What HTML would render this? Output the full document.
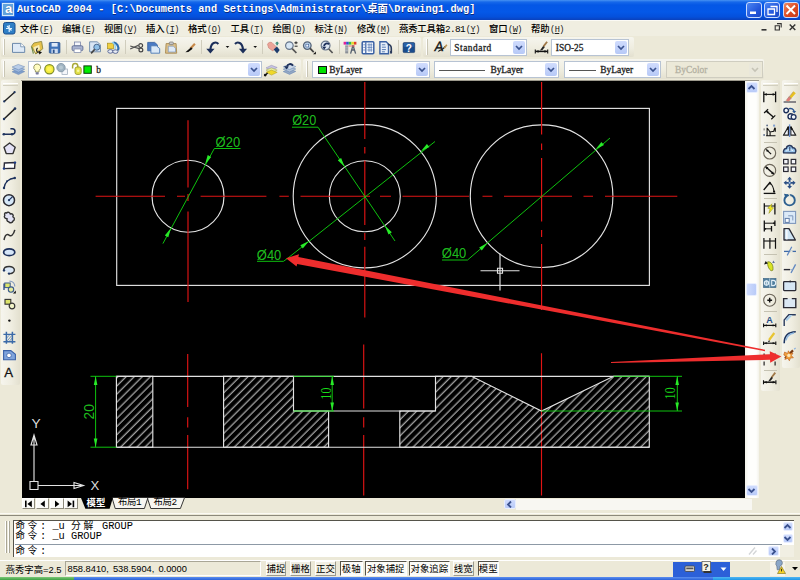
<!DOCTYPE html><html><head><meta charset="utf-8"><title>AutoCAD 2004</title><style>
*{margin:0;padding:0;box-sizing:border-box}
html,body{width:800px;height:580px;overflow:hidden;background:#ece9d8}
body{position:relative;font-family:"Liberation Sans","Noto Sans CJK SC",sans-serif;font-size:9.4px;color:#000}
.abs{position:absolute}
#title{left:0;top:0;width:800px;height:20px;background:linear-gradient(#4792f3 0,#1668ea 10%,#0457e6 25%,#0458e8 60%,#0450dc 84%,#0a41bc 100%)}
#ttext{left:17px;top:3px;color:#fff;font:bold 10.3px "Liberation Mono","Noto Sans CJK SC",monospace;white-space:pre;letter-spacing:0.075px;line-height:13px;text-shadow:0.5px 0.5px 0 #0a2a80}
#menu{left:0;top:20px;width:800px;height:16px;background:#f0eee1;border-top:1px solid #fbfaf5}
.mi{position:absolute;top:23px;line-height:11px;font-size:9.4px;white-space:pre;font-family:"Liberation Mono","Noto Sans CJK SC",monospace;letter-spacing:-0.55px}
.mc{font-weight:500;letter-spacing:-0.2px;font-family:"Liberation Sans","Noto Sans CJK SC",sans-serif}.ml{font-size:8.6px;letter-spacing:-0.5px;color:#222;margin-left:0.6px}
.mono{font-family:"Liberation Mono","Noto Sans CJK SC",monospace}
.tb{position:absolute;background:linear-gradient(#f6f5ee,#efede0 55%,#e3e0cf);border-radius:2px}
.combo{position:absolute;background:#fff;border:1px solid #b7c3d3;height:17px}
.cbtn{position:absolute;top:1px;right:1px;width:12px;height:13px;background:linear-gradient(#d0dcfd,#b7c9f7);border-radius:2px}
.ctext{position:absolute;top:2.6px;line-height:11px;font-size:9.4px;font-family:"Liberation Serif",serif;white-space:pre;color:#111;-webkit-text-stroke:0.3px #222}
.sb{position:absolute;top:561px;height:15px;line-height:14px;font-size:9.4px;text-align:center;border:1px solid;border-color:#fff #9d9a8c #9d9a8c #fff;white-space:nowrap;background:#f1efe4}
.cj{font-size:9.8px;letter-spacing:2.6px;font-family:"Liberation Sans","Noto Sans CJK SC",sans-serif}
.sb.on{border-color:#55534a #fff #fff #55534a;background:#fcfbf7}
</style></head><body>
<div id="title" class="abs"></div>
<div class="abs" style="left:2px;top:3px;width:12px;height:13px;background:#62a3de;border:1.2px solid #d4e8fa;box-shadow:0 0 0 0.5px #5b8fd6"></div>
<div class="abs" style="left:3px;top:1.5px;width:11px;color:#fff;font:bold 13px 'Liberation Sans',sans-serif;line-height:14px;text-align:center;text-shadow:0 0 1px #39629a">a</div>
<div id="ttext" class="abs">AutoCAD 2004 - [C:\Documents and Settings\Administrator\桌面\Drawing1.dwg]</div>
<div class="abs" style="left:746.2px;top:2px;width:16px;height:15.5px;border-radius:3px;border:1px solid #c9dbff;background:linear-gradient(135deg,#4b86f2,#2458dc 60%,#1a46c4)"></div>
<div class="abs" style="left:764.2px;top:2px;width:16px;height:15.5px;border-radius:3px;border:1px solid #c9dbff;background:linear-gradient(135deg,#4b86f2,#2458dc 60%,#1a46c4)"></div>
<div class="abs" style="left:782.6px;top:2px;width:16px;height:15.5px;border-radius:3px;border:1px solid #c9dbff;background:linear-gradient(135deg,#ee8a66,#dc4a22 55%,#c2391a)"></div>
<svg class="abs" style="left:0;top:0" width="800" height="20" viewBox="0 0 800 20"><rect x="750" y="11.5" width="6" height="2.5" fill="#fff"/><path d="M770.5 6.5h6.5v5.5M768 9h6.5v5.5h-6.5z" fill="none" stroke="#fff" stroke-width="1.3"/><path d="M786.5 5.5l8.5 8.5M795 5.5l-8.5 8.5" stroke="#fff" stroke-width="2"/></svg>
<div id="menu" class="abs"></div>
<svg class="abs" style="left:3px;top:21.5px" width="13" height="13" viewBox="0 0 13 13"><rect x="0.5" y="0.5" width="11.5" height="11.5" rx="2" fill="#2f7fc6" stroke="#1b4f8e"/><path d="M3 6.5h6M6.2 3v7M4 4l4.5 4.5" stroke="#dff1ff" stroke-width="1.2" fill="none"/></svg>
<div class="mi" style="left:20px"><span class="mc">文件</span><span class="ml">(<u>F</u>)</span></div>
<div class="mi" style="left:62px"><span class="mc">编辑</span><span class="ml">(<u>E</u>)</span></div>
<div class="mi" style="left:104px"><span class="mc">视图</span><span class="ml">(<u>V</u>)</span></div>
<div class="mi" style="left:146px"><span class="mc">插入</span><span class="ml">(<u>I</u>)</span></div>
<div class="mi" style="left:188px"><span class="mc">格式</span><span class="ml">(<u>O</u>)</span></div>
<div class="mi" style="left:230.5px"><span class="mc">工具</span><span class="ml">(<u>T</u>)</span></div>
<div class="mi" style="left:272.5px"><span class="mc">绘图</span><span class="ml">(<u>D</u>)</span></div>
<div class="mi" style="left:314.5px"><span class="mc">标注</span><span class="ml">(<u>N</u>)</span></div>
<div class="mi" style="left:357px"><span class="mc">修改</span><span class="ml">(<u>M</u>)</span></div>
<div class="mi" style="left:399px"><span class="mc">燕秀工具箱</span>2.81<span class="ml">(<u>Y</u>)</span></div>
<div class="mi" style="left:489px"><span class="mc">窗口</span><span class="ml">(<u>W</u>)</span></div>
<div class="mi" style="left:531px"><span class="mc">帮助</span><span class="ml">(<u>H</u>)</span></div>
<svg class="abs" style="left:755px;top:21px" width="45" height="14" viewBox="755 21 45 14"><rect x="761.5" y="29" width="5" height="1.6" fill="#333"/><path d="M777 23.6h4.2v4M775.2 25.8h4.2v4.2h-4.2z" fill="none" stroke="#333" stroke-width="1.1"/><path d="M789.7 24.5l5.6 5.6M795.3 24.5l-5.6 5.6" stroke="#333" stroke-width="1.4"/></svg>
<div class="tb" style="left:1px;top:37px;width:420px;height:20px"></div>
<div class="tb" style="left:423px;top:37px;width:211px;height:20px"></div>
<div class="tb" style="left:1px;top:59px;width:300px;height:20px"></div>
<div class="tb" style="left:303px;top:59px;width:461px;height:20px"></div>
<div class="abs" style="left:3px;top:39px;width:2.4px;height:16px;border-left:1px solid #fff;border-right:1px solid #c9c6b5"></div>
<div class="abs" style="left:426px;top:39px;width:2.4px;height:16px;border-left:1px solid #fff;border-right:1px solid #c9c6b5"></div>
<div class="abs" style="left:3px;top:61px;width:2.4px;height:16px;border-left:1px solid #fff;border-right:1px solid #c9c6b5"></div>
<div class="abs" style="left:305.5px;top:61px;width:2.4px;height:16px;border-left:1px solid #fff;border-right:1px solid #c9c6b5"></div>
<div class="abs" style="left:66px;top:40px;width:1px;height:14px;background:#d0cdbd"></div>
<div class="abs" style="left:124.5px;top:40px;width:1px;height:14px;background:#d0cdbd"></div>
<div class="abs" style="left:201px;top:40px;width:1px;height:14px;background:#d0cdbd"></div>
<div class="abs" style="left:262px;top:40px;width:1px;height:14px;background:#d0cdbd"></div>
<div class="abs" style="left:338.5px;top:40px;width:1px;height:14px;background:#d0cdbd"></div>
<div class="abs" style="left:397.5px;top:40px;width:1px;height:14px;background:#d0cdbd"></div>
<div class="combo" style="left:450.3px;top:39.3px;width:77.2px;background:#fff;border-color:#b7c3d3"><div class="ctext" style="left:3px;color:#222;letter-spacing:0.52px;-webkit-text-stroke-color:#222">Standard</div><div class="cbtn"></div><svg class="abs" style="right:3px;top:5px" width="8" height="6" viewBox="0 0 8 6"><path d="M1 1l3 3 3-3" fill="none" stroke="#3b5390" stroke-width="1.7"/></svg></div>
<div class="combo" style="left:551px;top:39.3px;width:78px;background:#fff;border-color:#b7c3d3"><div class="ctext" style="left:3.8px;color:#222;letter-spacing:0px;-webkit-text-stroke-color:#222">ISO-25</div><div class="cbtn"></div><svg class="abs" style="right:3px;top:5px" width="8" height="6" viewBox="0 0 8 6"><path d="M1 1l3 3 3-3" fill="none" stroke="#3b5390" stroke-width="1.7"/></svg></div>
<div class="combo" style="left:28.3px;top:61px;width:234px;background:#fff;border-color:#b7c3d3"><div class="ctext" style="left:67px;color:#222;letter-spacing:0px;-webkit-text-stroke-color:#222">b</div><div class="cbtn"></div><svg class="abs" style="right:3px;top:5px" width="8" height="6" viewBox="0 0 8 6"><path d="M1 1l3 3 3-3" fill="none" stroke="#3b5390" stroke-width="1.7"/></svg></div>
<div class="combo" style="left:311.5px;top:61px;width:118px;background:#fff;border-color:#b7c3d3"><div class="abs" style="left:5.6px;top:3.5px;width:8.5px;height:8.5px;background:#00e000;border:1px solid #111"></div><div class="ctext" style="left:16.8px;color:#222;letter-spacing:0px;-webkit-text-stroke-color:#222">ByLayer</div><div class="cbtn"></div><svg class="abs" style="right:3px;top:5px" width="8" height="6" viewBox="0 0 8 6"><path d="M1 1l3 3 3-3" fill="none" stroke="#3b5390" stroke-width="1.7"/></svg></div>
<div class="combo" style="left:434.2px;top:61px;width:125px;background:#fff;border-color:#b7c3d3"><div class="abs" style="left:4.3px;top:7.5px;width:45.5px;height:1.3px;background:#555"></div><div class="ctext" style="left:55.2px;color:#222;letter-spacing:0px;-webkit-text-stroke-color:#222">ByLayer</div><div class="cbtn"></div><svg class="abs" style="right:3px;top:5px" width="8" height="6" viewBox="0 0 8 6"><path d="M1 1l3 3 3-3" fill="none" stroke="#3b5390" stroke-width="1.7"/></svg></div>
<div class="combo" style="left:564.3px;top:61px;width:97px;background:#fff;border-color:#b7c3d3"><div class="abs" style="left:4px;top:7.5px;width:26.5px;height:1.3px;background:#555"></div><div class="ctext" style="left:35px;color:#222;letter-spacing:0px;-webkit-text-stroke-color:#222">ByLayer</div><div class="cbtn"></div><svg class="abs" style="right:3px;top:5px" width="8" height="6" viewBox="0 0 8 6"><path d="M1 1l3 3 3-3" fill="none" stroke="#3b5390" stroke-width="1.7"/></svg></div>
<div class="combo" style="left:666px;top:61px;width:96.5px;background:#ece9d8;border-color:#cfcdc0"><div class="ctext" style="left:8px;color:#b5b2a3;letter-spacing:0px;-webkit-text-stroke-color:#b5b2a3">ByColor</div><div class="cbtn" style="background:#e9e7db"></div><svg class="abs" style="right:3px;top:5px" width="8" height="6" viewBox="0 0 8 6"><path d="M1 1l3 3 3-3" fill="none" stroke="#c5c3b6" stroke-width="1.6"/></svg></div>
<div class="tb" style="left:1px;top:80px;width:19px;height:305px;background:linear-gradient(90deg,#f6f5ee,#efede0 55%,#e3e0cf)"></div>
<div class="abs" style="left:3px;top:82.5px;width:15px;height:3px;border-top:1px solid #fff;border-bottom:1px solid #d2cfbf"></div>
<div class="abs" style="left:21px;top:79.6px;width:738px;height:1.4px;background:#9c998c"></div>
<div class="abs" style="left:21.5px;top:81px;width:723px;height:416.5px;background:#000"></div>
<div class="abs" style="left:744.5px;top:81px;width:14px;height:416.5px;background:linear-gradient(90deg,#f3f2ea,#fefefc 25%,#fefefc 80%,#f3f2ea)"></div>
<div class="abs" style="left:746px;top:82px;width:11.5px;height:11px;background:linear-gradient(#cfdbfd,#b9cbf8);border-radius:2px;border:0.5px solid #e8eeff"></div>
<svg class="abs" style="left:747.25px;top:83.7px" width="9" height="8" viewBox="0 0 9 8"><path d="M1.5 5l3-3 3 3" fill="none" stroke="#3a518f" stroke-width="1.8"/></svg>
<div class="abs" style="left:746px;top:485px;width:11.5px;height:11px;background:linear-gradient(#cfdbfd,#b9cbf8);border-radius:2px;border:0.5px solid #e8eeff"></div>
<svg class="abs" style="left:747.25px;top:486.7px" width="9" height="8" viewBox="0 0 9 8"><path d="M1.5 2l3 3 3-3" fill="none" stroke="#3a518f" stroke-width="1.8"/></svg>
<div class="abs" style="left:746px;top:283px;width:11px;height:13px;background:linear-gradient(90deg,#cfdbfd,#b9cbf8);border-radius:2px;border:0.5px solid #e8eeff"></div>
<div class="tb" style="left:761px;top:80px;width:18.5px;height:311px;background:linear-gradient(90deg,#f6f5ee,#efede0 55%,#e3e0cf)"></div>
<div class="tb" style="left:781.5px;top:80px;width:18.5px;height:288px;background:linear-gradient(90deg,#f6f5ee,#efede0 55%,#e3e0cf)"></div>
<div class="abs" style="left:763px;top:82.5px;width:14.5px;height:3px;border-top:1px solid #fff;border-bottom:1px solid #d2cfbf"></div>
<div class="abs" style="left:783.5px;top:82.5px;width:14.5px;height:3px;border-top:1px solid #fff;border-bottom:1px solid #d2cfbf"></div>
<div class="abs" style="left:763.5px;top:141.5px;width:13px;height:1px;background:#c5c2b2"></div>
<div class="abs" style="left:763.5px;top:197.5px;width:13px;height:1px;background:#c5c2b2"></div>
<div class="abs" style="left:763.5px;top:254px;width:13px;height:1px;background:#c5c2b2"></div>
<div class="abs" style="left:763.5px;top:310.5px;width:13px;height:1px;background:#c5c2b2"></div>
<div class="abs" style="left:763.5px;top:369.5px;width:13px;height:1px;background:#c5c2b2"></div>
<div class="abs" style="left:21.5px;top:497.5px;width:737px;height:12px;background:#ece9d8"></div>
<div class="abs" style="left:21.5px;top:498.3px;width:13.9px;height:11px;background:#fbfbf8;border:1px solid;border-color:#fff #8e8b7d #8e8b7d #fff"></div>
<div class="abs" style="left:35.6px;top:498.3px;width:13.9px;height:11px;background:#fbfbf8;border:1px solid;border-color:#fff #8e8b7d #8e8b7d #fff"></div>
<div class="abs" style="left:49.7px;top:498.3px;width:13.9px;height:11px;background:#fbfbf8;border:1px solid;border-color:#fff #8e8b7d #8e8b7d #fff"></div>
<div class="abs" style="left:63.8px;top:498.3px;width:13.9px;height:11px;background:#fbfbf8;border:1px solid;border-color:#fff #8e8b7d #8e8b7d #fff"></div>
<svg class="abs" style="left:22px;top:498px" width="58" height="12" viewBox="22 498 58 12" fill="#000"><rect x="25" y="500.6" width="1.6" height="6.6"/><path d="M31.8 500.6v6.6l-4.4-3.3z"/><path d="M44.8 500.6v6.6l-4.4-3.3z"/><path d="M55 500.6v6.6l4.4-3.3z"/><path d="M67.6 500.6v6.6l4.4-3.3z"/><rect x="72.6" y="500.6" width="1.6" height="6.6"/></svg>
<svg class="abs" style="left:78px;top:497px" width="110" height="13" viewBox="78 497 110 13"><path d="M147.2 497.5l3.6 11h29.6l4.2-11z" fill="#f7f6f1" stroke="#222" stroke-width="0.9"/><path d="M112 497.5l3.2 11h29.2l3.6-11z" fill="#f7f6f1" stroke="#222" stroke-width="0.9"/><path d="M80.8 497.5l4.6 11.3h24.2l3.4-11.3z" fill="#000"/></svg>
<div class="abs" style="left:86.5px;top:498px;font-size:9.4px;line-height:10px;color:#fff;font-weight:bold;white-space:nowrap">模型</div>
<div class="abs mono" style="left:118px;top:498px;font-size:9.4px;line-height:10px;white-space:nowrap;letter-spacing:-0.4px">布局1</div>
<div class="abs mono" style="left:153.5px;top:498px;font-size:9.4px;line-height:10px;white-space:nowrap;letter-spacing:-0.4px">布局2</div>
<div class="abs" style="left:516px;top:498.5px;width:236px;height:11px;background:#f8f7f2"></div>
<div class="abs" style="left:504px;top:498.5px;width:12px;height:10.5px;background:linear-gradient(#cfdbfd,#b9cbf8);border-radius:2px;border:0.5px solid #e8eeff"></div>
<svg class="abs" style="left:505.5px;top:499.95px" width="9" height="8" viewBox="0 0 9 8"><path d="M5 1.5l-3 3 3 3" fill="none" stroke="#3a518f" stroke-width="1.8"/></svg>
<div class="abs" style="left:0;top:513px;width:800px;height:1px;background:#fbfaf4"></div>
<div class="abs" style="left:0;top:515.2px;width:800px;height:1.1px;background:#8c897b"></div>
<div class="abs" style="left:5px;top:521px;width:2px;height:32px;border-left:1px solid #fff;border-right:1px solid #a8a595"></div>
<div class="abs" style="left:8px;top:521px;width:2px;height:32px;border-left:1px solid #fff;border-right:1px solid #a8a595"></div>
<div class="abs" style="left:13px;top:519.5px;width:781px;height:37.5px;background:#fff;border-top:1.5px solid #55534a;border-left:1.5px solid #55534a"></div>
<div class="abs" style="left:779.5px;top:544.5px;width:14.5px;height:12.5px;background:#f1efe3"></div>
<div class="abs" style="left:14.5px;top:543.6px;width:767px;height:1px;background:#8d99a6"></div>
<div class="abs mono" style="left:15.2px;top:520.6px;font-size:10.33px;line-height:10px;white-space:pre"><span class="cj">命令</span>: _u <span class="cj">分解</span> GROUP</div>
<div class="abs mono" style="left:15.2px;top:530.6px;font-size:10.33px;line-height:10px;white-space:pre"><span class="cj">命令</span>: _u GROUP</div>
<div class="abs mono" style="left:15.2px;top:546px;font-size:10.33px;line-height:10px;white-space:pre"><span class="cj">命令</span>:</div>
<div class="abs" style="left:782.5px;top:522.3px;width:10px;height:9px;background:linear-gradient(#cfdbfd,#b9cbf8);border-radius:2px;border:0.5px solid #e8eeff"></div>
<svg class="abs" style="left:783.0px;top:523.0px" width="9" height="8" viewBox="0 0 9 8"><path d="M1.5 5l3-3 3 3" fill="none" stroke="#3a518f" stroke-width="1.8"/></svg>
<div class="abs" style="left:782.5px;top:534.3px;width:10px;height:9px;background:linear-gradient(#cfdbfd,#b9cbf8);border-radius:2px;border:0.5px solid #e8eeff"></div>
<svg class="abs" style="left:783.0px;top:535.0px" width="9" height="8" viewBox="0 0 9 8"><path d="M1.5 2l3 3 3-3" fill="none" stroke="#3a518f" stroke-width="1.8"/></svg>
<div class="abs" style="left:767.5px;top:545.5px;width:11.5px;height:10px;background:linear-gradient(#cfdbfd,#b9cbf8);border-radius:2px;border:0.5px solid #e8eeff"></div>
<svg class="abs" style="left:768.75px;top:546.7px" width="9" height="8" viewBox="0 0 9 8"><path d="M3 1.5l3 3-3 3" fill="none" stroke="#3a518f" stroke-width="1.8"/></svg>
<svg class="abs" style="left:746px;top:546px" width="12" height="10" viewBox="0 0 12 10"><path d="M9 1.5l-6 7M10.5 4.5l-3.5 4" fill="none" stroke="#d4d6d8" stroke-width="1.4"/></svg>
<div class="abs" style="left:0;top:559.5px;width:800px;height:1px;background:#fff"></div>
<div class="abs" style="left:5.5px;top:563.5px;font-size:9.4px;line-height:11px;white-space:pre">燕秀字高=2.5</div>
<div class="abs" style="left:65px;top:561px;width:196px;height:15px;border:1px solid;border-color:#a9a696 #fff #fff #a9a696"></div>
<div class="abs" style="left:67.5px;top:563.5px;font-size:9.3px;line-height:11px;white-space:pre;letter-spacing:0.0px;word-spacing:1.5px">858.8410, 538.5904, 0.0000</div>
<div class="sb" style="left:265.5px;width:20.5px">捕捉</div>
<div class="sb" style="left:290px;width:21px">栅格</div>
<div class="sb" style="left:315px;width:21px">正交</div>
<div class="sb on" style="left:340px;width:22.5px">极轴</div>
<div class="sb on" style="left:364.5px;width:42.5px">对象捕捉</div>
<div class="sb on" style="left:408.8px;width:41px">对象追踪</div>
<div class="sb" style="left:452.5px;width:21.5px">线宽</div>
<div class="sb on" style="left:477.5px;width:21.5px">模型</div>
<div class="abs" style="left:673.2px;top:561.6px;width:57px;height:15.4px;background:#2c60d8"></div><div class="abs" style="left:770px;top:561.6px;width:15px;height:14.2px;background:#f5f3ea"></div>
<svg class="abs" style="left:673px;top:559px" width="127" height="19" viewBox="673 559 127 19"><rect x="685" y="566" width="9.5" height="5.5" rx="1" fill="#d6d3cc" stroke="#444" stroke-width="0.8"/><rect x="686.3" y="567.6" width="7" height="1.6" fill="#555"/><rect x="702" y="561.5" width="8.5" height="10" fill="#f5f3e6" stroke="#555" stroke-width="0.7"/><rect x="703.5" y="571" width="8" height="2" fill="#333"/><path d="M720.5 567.5h6l-3 3.4z" fill="#fff"/><path d="M776 562.5a3.2 3.2 0 1 1 4 3.5l-0.6 3.8-2.2 0-0.4-3.8a3.2 3.2 0 0 1-0.8-3.5z" fill="#8aa6c8" stroke="#56657a" stroke-width="0.6"/><path d="M781.5 566.5l4 7h-8z" fill="#f5d327" stroke="#7a6a10" stroke-width="0.6"/><rect x="781.1" y="568.8" width="0.9" height="2.6" fill="#222"/><path d="M792 567h6l-3 3.2z" fill="#000"/></svg>
<div class="abs" style="left:703.3px;top:561.5px;font:bold 9px 'Liberation Sans',sans-serif;line-height:10px;color:#222">?</div>
<div class="abs" style="left:0;top:577px;width:800px;height:3px;background:linear-gradient(#5c8ff0,#2b62d8)"></div>
<div class="abs" style="left:0;top:577px;width:73.5px;height:3px;background:linear-gradient(#7cc878,#3fa043)"></div>
<div class="abs" style="left:712.5px;top:577px;width:88px;height:3px;background:linear-gradient(#4fb5f2,#1e96e6)"></div>
<svg class="abs" style="left:0;top:0" width="800" height="580" viewBox="0 0 800 580">
<defs><pattern id="hat" width="5.745" height="5.745" patternUnits="userSpaceOnUse" patternTransform="rotate(-45)"><line x1="0" y1="4.985" x2="5.745" y2="4.985" stroke="#e6e6e6" stroke-width="0.95"/></pattern><clipPath id="clip"><rect x="21.5" y="81" width="723" height="416.5"/></clipPath></defs>
<g clip-path="url(#clip)">
<rect x="116.7" y="108.4" width="532.7" height="177" stroke="#e2e2e2" stroke-width="1.15" fill="none"/>
<circle cx="188" cy="196.2" r="36" stroke="#e2e2e2" stroke-width="1.15" fill="none"/>
<circle cx="364.8" cy="196.2" r="71.6" stroke="#e2e2e2" stroke-width="1.15" fill="none"/>
<circle cx="364.8" cy="196.2" r="35.5" stroke="#e2e2e2" stroke-width="1.15" fill="none"/>
<circle cx="541.6" cy="196.2" r="71.3" stroke="#e2e2e2" stroke-width="1.15" fill="none"/>
<path d="M95.6 196.2H165M177 196.2H185M200.6 196.2H266.4M279.4 196.2H288.8M300.5 196.2H370M380 196.2H391M402.5 196.2H469M482.5 196.2H492.4M504 196.2H572M583.5 196.2H593M605 196.2H677.3" stroke="#e01414" stroke-width="1.15" fill="none"/>
<path d="M188 120.3V187.5M188 194V201M188 211.5V302" stroke="#e01414" stroke-width="1.15" fill="none"/>
<path d="M364.8 82V139M364.8 147V153.6M364.8 160.6V225M364.8 233V240M364.8 246.7V317.5" stroke="#e01414" stroke-width="1.15" fill="none"/>
<path d="M541.6 82V134.5M541.6 143.4V150M541.6 158V221.5M541.6 230V237M541.6 244V310" stroke="#e01414" stroke-width="1.15" fill="none"/>
<path d="M187.7 354V407M187.7 417.3V427.5M187.7 435V489.3" stroke="#e01414" stroke-width="1.15" fill="none"/>
<path d="M363.7 344.5V408.5M363.7 417.3V427.5M363.7 435V495.5" stroke="#e01414" stroke-width="1.15" fill="none"/>
<path d="M541.5 353.3V495.5" stroke="#e01414" stroke-width="1.15" fill="none"/>
<path d="M240.5 148.5H214.3L162.9 243.6" stroke="#10d810" stroke-width="0.9" fill="none"/>
<path d="M205.0 164.4L207.7 155.1L211.2 156.9z" fill="#28ea28"/>
<path d="M171.0 228.0L168.3 237.3L164.8 235.5z" fill="#28ea28"/>
<path d="M292 127.2H318L395 241" stroke="#10d810" stroke-width="0.9" fill="none"/>
<path d="M344.8 166.9L337.8 160.2L341.1 157.9z" fill="#28ea28"/>
<path d="M384.8 225.5L391.8 232.2L388.5 234.5z" fill="#28ea28"/>
<path d="M257 261.3H283.5L288 258L435 141.5" stroke="#10d810" stroke-width="0.9" fill="none"/>
<path d="M309.0 240.9L302.8 248.4L300.3 245.3z" fill="#28ea28"/>
<path d="M420.7 151.5L426.9 144.0L429.4 147.1z" fill="#28ea28"/>
<path d="M442 260H467.5L610 138" stroke="#10d810" stroke-width="0.9" fill="none"/>
<path d="M487.7 242.8L481.8 250.5L479.2 247.5z" fill="#28ea28"/>
<path d="M595.5 149.6L601.4 141.9L604.0 144.9z" fill="#28ea28"/>
<text x="215.6" y="146.8" fill="#22d422" fill-opacity="0.9" font-family="Liberation Sans, sans-serif" font-size="13.8" textLength="24.5" lengthAdjust="spacingAndGlyphs">Ø20</text>
<text x="292.2" y="125.3" fill="#22d422" fill-opacity="0.9" font-family="Liberation Sans, sans-serif" font-size="13.8" textLength="24" lengthAdjust="spacingAndGlyphs">Ø20</text>
<text x="256.8" y="259.7" fill="#22d422" fill-opacity="0.9" font-family="Liberation Sans, sans-serif" font-size="13.8" textLength="24.5" lengthAdjust="spacingAndGlyphs">Ø40</text>
<text x="441.8" y="258.3" fill="#22d422" fill-opacity="0.9" font-family="Liberation Sans, sans-serif" font-size="13.8" textLength="24.5" lengthAdjust="spacingAndGlyphs">Ø40</text>
<path d="M116.4 376.3H152.8V447.2H116.4z" fill="url(#hat)" stroke="#e2e2e2" stroke-width="1.15" />
<path d="M223.6 376.3H293.5V411H328.6V447.2H223.6z" fill="url(#hat)" stroke="#e2e2e2" stroke-width="1.15" />
<path d="M435.5 376.3H471.5L541.5 411L613.6 376.3H649.3V447.2H399.8V411H435.5z" fill="url(#hat)" stroke="#e2e2e2" stroke-width="1.15" />
<path d="M116.4 376.3H649.3M116.4 447.2H649.3M293.5 411H435.5" stroke="#e2e2e2" stroke-width="1.15" fill="none"/>
<path d="M90.5 376.3H116.4M90.5 447.2H116.4M95.6 376.3V447.2" stroke="#10d810" stroke-width="0.9" fill="none"/>
<path d="M95.6 376.3L97.4 384.9L93.8 384.9z" fill="#28ea28"/>
<path d="M95.6 447.2L93.8 438.6L97.4 438.6z" fill="#28ea28"/>
<text transform="translate(93.5,419.5) rotate(-90)" fill="#22d422" fill-opacity="0.9" font-family="Liberation Sans, sans-serif" font-size="13.8">20</text>
<path d="M293.5 376.3H334M293.5 411H334M332.2 376.3V411" stroke="#10d810" stroke-width="0.9" fill="none"/>
<path d="M332.2 376.3L334.0 384.9L330.4 384.9z" fill="#28ea28"/>
<path d="M332.2 411.0L330.4 402.4L334.0 402.4z" fill="#28ea28"/>
<text transform="translate(330.9,399.4) rotate(-90)" fill="#18dc18" font-family="Liberation Serif, serif" font-size="14.8" textLength="11.8" lengthAdjust="spacingAndGlyphs">10</text>
<path d="M613.6 376.3H682M541.5 411H682M677.3 376.3V411" stroke="#10d810" stroke-width="0.9" fill="none"/>
<path d="M677.2 376.3L679.0 384.9L675.4 384.9z" fill="#28ea28"/>
<path d="M677.2 411.0L675.4 402.4L679.0 402.4z" fill="#28ea28"/>
<text transform="translate(675.4,399.2) rotate(-90)" fill="#18dc18" font-family="Liberation Serif, serif" font-size="14.8" textLength="11.8" lengthAdjust="spacingAndGlyphs">10</text>
<path d="M30 481.5h8v8h-8zM34 481.5V436M31 445L34 435l3 10zM38 485.5H82M74 482.5l9.5 3-9.5 3z" stroke="#e2e2e2" stroke-width="1.15" fill="none"/>
<text x="31.6" y="428.3" fill="#dcdcdc" font-family="Liberation Sans, sans-serif" font-size="13.6" textLength="9.2" lengthAdjust="spacingAndGlyphs">Y</text>
<text x="90.4" y="490" fill="#dcdcdc" font-family="Liberation Sans, sans-serif" font-size="12.6" textLength="8.8" lengthAdjust="spacingAndGlyphs">X</text>
<path d="M480.5 270.7H519.5M500 253.5V290.5M497.5 268.2h5v5h-5z" stroke="#e2e2e2" stroke-width="1.15" fill="none"/>
</g>
<g transform="translate(18.5 47.8)"><path d="M-6 -4.4h8.2l4 3.4v5.6h-12.2z" fill="#dfeaf6" stroke="#6c89aa" stroke-width="1"/><path d="M2.2 -4.4v3.4h4" fill="#fff" stroke="#6c89aa" stroke-width="0.8"/></g>
<g transform="translate(37 47.8)"><path d="M-5.6 -1.4l2.4-3.4 7.8-1.6 1.2 7.4-7 5.2z" fill="#e6c24a" stroke="#8f8840" stroke-width="0.9" stroke-linejoin="round"/><path d="M-3.6 -0.6l5.8-2.4 0.8 4.4-4.6 3.2z" fill="#f6ecb8"/><path d="M-5.4 -1.2l1.8 7" stroke="#6f8a48" stroke-width="1.2"/><path d="M0.6 0.2a2.6 2.6 0 0 0 1 4.6" fill="none" stroke="#2a2a2a" stroke-width="1.3"/><path d="M1.4 3l3.6 1.4-2.6 2.2z" fill="#111"/></g>
<g transform="translate(54.6 47.8)"><rect x="-5.3" y="-5.3" width="10.6" height="10.6" rx="0.8" fill="#3f73b8" stroke="#2a518c" stroke-width="0.8"/><rect x="-3" y="-4.8" width="6" height="3.6" fill="#dfeaf8"/><rect x="-3.2" y="1" width="6.4" height="4.2" fill="#cfdcef"/><rect x="-1.8" y="1.8" width="1.8" height="3.4" fill="#2a518c"/></g>
<g transform="translate(77.5 47.8)"><rect x="-3" y="-5.8" width="6" height="4" fill="#f4f6fb" stroke="#7a86a8" stroke-width="0.8"/><rect x="-5.4" y="-2" width="10.8" height="4.8" rx="1.2" fill="#aab4d0" stroke="#5f6c94" stroke-width="0.9"/><rect x="-3.4" y="1.2" width="6.8" height="3.4" fill="#fff" stroke="#7a86a8" stroke-width="0.7"/></g>
<g transform="translate(95.2 47.8)"><path d="M-5.6 -6h7.5l3.4 3v7h-10.9z" fill="#d9e6f4" stroke="#6c89aa" stroke-width="0.9"/><circle cx="1.6" cy="-0.6" r="3" fill="#8fc0e8" stroke="#4a6a90" stroke-width="1"/><path d="M-0.5 1.6l-3.6 4" stroke="#444" stroke-width="1.6"/></g>
<g transform="translate(113 47.8)"><rect x="-5.5" y="-4.6" width="6" height="5.6" fill="#f0d040" stroke="#a89020" stroke-width="0.7"/><path d="M0.5 -5.5a6 6 0 0 1 4.5 8" fill="none" stroke="#2f6fb0" stroke-width="2.2"/><path d="M-1 -5.6a6 6 0 0 1 3 7" fill="none" stroke="#8fd0f0" stroke-width="1.4"/><ellipse cx="-2.6" cy="3.6" rx="2.6" ry="1.8" fill="#e8ecf4" stroke="#506090" stroke-width="0.9"/><ellipse cx="2.4" cy="3.8" rx="2.6" ry="1.8" fill="#e8ecf4" stroke="#506090" stroke-width="0.9"/></g>
<g transform="translate(136.5 47.8)"><path d="M-6.3 -1.8l9 2.6M-6.3 1.2l8-3.6" stroke="#555" stroke-width="1.3" fill="none"/><circle cx="4.2" cy="-2.2" r="1.9" fill="none" stroke="#444" stroke-width="1.2"/><circle cx="4.4" cy="2.2" r="1.9" fill="none" stroke="#444" stroke-width="1.2"/></g>
<g transform="translate(153.7 47.8)"><path d="M-6 -5.4h7l2.6 2.4v6h-9.6z" fill="#4b7bc4" stroke="#2f5a9c" stroke-width="0.8"/><path d="M-2.8 -2h5.6l3.2 2.8v4.6h-8.8z" fill="#dbe9f6" stroke="#4a78b4" stroke-width="0.9"/></g>
<g transform="translate(171.3 47.8)"><path d="M-5.2 -4.2h10l0.6 9.6h-11.2z" fill="#dcc08a" stroke="#a88a52" stroke-width="0.9"/><rect x="-2" y="-5.8" width="4" height="2.6" rx="0.8" fill="#c8c8c8" stroke="#777" stroke-width="0.7"/><path d="M-3 -1.6h5l2.2 2v3.8h-7.2z" fill="#dfeaf7" stroke="#7f98b8" stroke-width="0.7"/></g>
<g transform="translate(190.3 47.8)"><path d="M4.6 -4l-4.4 4.6" stroke="#c88a4a" stroke-width="2.2"/><path d="M0.8 -0.6l1.5 1.5-4.2 3.4-3 0.2z" fill="#111"/></g>
<g transform="translate(212.6 48.199999999999996)"><g transform="scale(1 1)"><path d="M5.8 -4.3C3.4 -6.8 -1.6 -6.2 -2.2 1.4" fill="none" stroke="#1c2f5a" stroke-width="2.1"/><path d="M-6.3 0.6h8.2l-4.1 4.8z" fill="#1c2f5a"/></g></g>
<g transform="translate(240.8 48.199999999999996)"><g transform="scale(-1 1)"><path d="M5.8 -4.3C3.4 -6.8 -1.6 -6.2 -2.2 1.4" fill="none" stroke="#1c2f5a" stroke-width="2.1"/><path d="M-6.3 0.6h8.2l-4.1 4.8z" fill="#1c2f5a"/></g></g>
<g transform="translate(227.5 46.8)"><path d="M-1.8 -0.9h3.6l-1.8 2z" fill="#111"/></g>
<g transform="translate(255.2 46.8)"><path d="M-1.8 -0.9h3.6l-1.8 2z" fill="#111"/></g>
<g transform="translate(273.5 47.8)"><path d="M-6 -3.6c1.4-2.6 4.2-2.2 5.2-0.8l3.6 3.4-3.4 4.2-4.2-3z" fill="#eba498" stroke="#c87a70" stroke-width="0.6"/><path d="M0.2 1.6l3.2-2.8 2.8 3.4-2.6 3.6z" fill="#1d3c6c"/><path d="M3.6 -6.4l2.2 2.2h-1.4v1.6h-1.6v-1.6h-1.4z" fill="#3a8a7a"/></g>
<g transform="translate(291 47.8)"><circle cx="-1.6" cy="-2.2" r="3.8" fill="#d7e6f4" stroke="#66758a" stroke-width="1.2"/><path d="M1.2 0.8l4.2 4.4" stroke="#555" stroke-width="1.7"/><path d="M3.4 -5h3.2M5 -6.4v2.8M3.6 -1.6h3" stroke="#222" stroke-width="1"/></g>
<g transform="translate(309.5 47.8)"><circle cx="-2.2" cy="-2.2" r="3.8" fill="#bcd4ec" stroke="#56657a" stroke-width="1.3"/><rect x="-3.6" y="-3.6" width="2.8" height="2.8" fill="#f4f8ff" stroke="#3a5a90" stroke-width="0.6"/><path d="M0.6 0.6l3.6 3.8" stroke="#444" stroke-width="1.7"/><path d="M6.4 3.6v2.8h-2.8z" fill="#111"/></g>
<g transform="translate(327 47.8)"><circle cx="-1.4" cy="-2.2" r="4.4" fill="#dfe8f2" stroke="#66758a" stroke-width="1.2"/><path d="M2 -3.6c-2-1.6-4.6-0.6-5 1.8" fill="none" stroke="#1c2f5a" stroke-width="1.8"/><path d="M-5 -1.4l2.2 3 2.2-2.6z" fill="#1c2f5a"/><path d="M1.8 1.2l3.8 4" stroke="#555" stroke-width="1.7"/></g>
<g transform="translate(350 47.8)"><rect x="-6.4" y="-6" width="2.6" height="2.8" fill="#e0209a"/><rect x="-3.8" y="-6" width="2.6" height="2.8" fill="#2a4fd0"/><rect x="-1.2" y="-6" width="2.6" height="2.8" fill="#2fb84a"/><rect x="1.4" y="-6" width="2.6" height="2.8" fill="#e8d82a"/><rect x="4" y="-6" width="2.4" height="2.8" fill="#e0402a"/><path d="M-4.8 -2.4h3v8h-3z" fill="#8a8f96"/><path d="M-4.8 -0.6h3M-4.8 1.2h3M-4.8 3h3" stroke="#d8dce0" stroke-width="0.6"/><path d="M3 -2.6l-2.4 8.4M3 -2.6l2.6 8.4M1.6 2.2h3" stroke="#55606e" stroke-width="1.3" fill="none"/><path d="M-1.5 -1.8h6.5" stroke="#e06a6a" stroke-width="1"/></g>
<g transform="translate(368 47.8)"><rect x="-5.8" y="-6" width="11.6" height="12" rx="1" fill="#f4f8fd" stroke="#3b62a4" stroke-width="1.5"/><path d="M-2.2 -5.5v11" stroke="#3b62a4" stroke-width="1.2"/><path d="M-0.6 -3h5M-0.6 -0.4h5M-0.6 2.2h5M1 -4.5v8.6M3.2 -4.5v8.6" stroke="#5a7eb8" stroke-width="0.8"/><path d="M-4.6 -3h1.4M-4.6 -0.4h1.4M-4.6 2.2h1.4" stroke="#3b62a4" stroke-width="0.8"/></g>
<g transform="translate(385.5 47.8)"><path d="M-5.6 -6h6.2l2.4 2.2v9.8h-8.6z" fill="#e8f0fa" stroke="#3b62a4" stroke-width="1.4"/><path d="M-3.6 -3h3.4M-3.6 -0.6h4M-3.6 1.8h4M-3.6 4h3" stroke="#4a70ac" stroke-width="0.9"/><path d="M2.2 -3.6c2.4 0.2 3.6 2 3.6 4.2v4.6" fill="none" stroke="#2a3a5a" stroke-width="1.6"/><rect x="4.6" y="3.2" width="1.8" height="2.6" fill="#2a3a5a"/></g>
<g transform="translate(408.9 47.599999999999994)"><rect x="-5.8" y="-5" width="11.6" height="10" rx="1.2" fill="#1a4c8c" stroke="#123466" stroke-width="0.6"/><rect x="-5.2" y="-4.6" width="10.4" height="4" rx="1" fill="#2d66ac" opacity="0.8"/></g>
<text x="405.7" y="51.5" font-family="Liberation Sans,sans-serif" font-weight="bold" font-size="10" fill="#fff">?</text>
<text x="434.4" y="51.199999999999996" font-family="Liberation Sans,sans-serif" font-size="13.5" fill="#111" stroke="#111" stroke-width="0.35" transform="skewX(-8) translate(6.8 0)">A</text>
<g transform="translate(440.4 47.8)"><path d="M5.6 -1.6c-1.6 2.2-3 3.8-5.4 4.6l-3 1.4 1.4-2.2c2.2-0.6 4-1.6 5.4-3.8z" fill="#222"/><path d="M6.4 -3l-2.6 3.4" stroke="#b89050" stroke-width="1.6"/></g>
<g transform="translate(541.5 47.8)"><path d="M-6 3.6h12" stroke="#111" stroke-width="1.5"/><path d="M-6.2 1.6v4M6.2 1.6v4" stroke="#111" stroke-width="1.1"/><path d="M-5.6 3.6l2.6-1.3v2.6zM5.6 3.6l-2.6-1.3v2.6z" fill="#111"/><path d="M-1.6 2.8l2.6-0.6 2.4-3-1.6-1.2z" fill="#222"/><path d="M2 -1.4l3.6-4.6" stroke="#a07848" stroke-width="1.8"/></g>
<g transform="translate(18.3 69.6)"><path d="M-6.2 2.2l6.2-2.6 6.4 2.4-6.2 3z" fill="#7f9fcc" stroke="#6080b0" stroke-width="0.5"/><path d="M-6.2 -0.2l6.2-2.6 6.4 2.4-6.2 3z" fill="#9db8dc" stroke="#6080b0" stroke-width="0.5"/><path d="M-6.2 -2.6l6.2-2.6 6.4 2.4-6.2 3z" fill="#b9cde8" stroke="#6080b0" stroke-width="0.5"/></g>
<g transform="translate(37.2 69.6)"><path d="M0 -5.6a3.4 3.4 0 0 1 2 6.2l-0.3 1.8h-3.4l-0.3-1.8a3.4 3.4 0 0 1 2-6.2z" fill="#fffcc0" stroke="#8c8c58" stroke-width="0.9"/><rect x="-1.5" y="2.6" width="3" height="2.2" rx="0.6" fill="#777a9a"/></g>
<g transform="translate(49.4 69.19999999999999)"><circle r="4.6" fill="#f4ec3c" stroke="#7f8c28" stroke-width="1.2"/><circle r="2.4" fill="#fff45a"/></g>
<g transform="translate(61.4 68.8)"><rect x="0.6" y="0.2" width="5.6" height="5.6" fill="#f4f6fa" stroke="#9aa8b8" stroke-width="0.7"/><circle cx="-0.4" cy="-1.2" r="4.2" fill="#9fb2c0" stroke="#7f93a4" stroke-width="0.8"/><circle cx="-0.4" cy="-1.2" r="2" fill="#b8c8d2"/></g>
<g transform="translate(76.6 69.6)"><path d="M-4 -1.2v-2.4a2.6 2.6 0 0 1 5.2 0v1" fill="none" stroke="#a8a838" stroke-width="1.5"/><rect x="-1.6" y="-2.6" width="6.2" height="7.4" rx="2" fill="#e4e24a" stroke="#9a9a30" stroke-width="0.9"/><circle cx="1.6" cy="1.2" r="1.3" fill="#f8f8a0"/></g>
<rect x="83.9" y="65.9" width="7.4" height="7.4" fill="#00ee00" stroke="#0a3a0a" stroke-width="1"/>
<g transform="translate(271 69.89999999999999)"><path d="M-5 -2l5.4-2.6 5.8 2.2-5.6 2.8z" fill="#c8c4e4" stroke="#8a88b0" stroke-width="0.5"/><path d="M-5 0.2l5.4-2.2 5.8 2.2-5.6 2.6z" fill="#e8f0a0" stroke="#9aa050" stroke-width="0.5"/><path d="M-5 2.4l5.4-2.2 5.8 2.2-5.6 2.8z" fill="#f0d828" stroke="#a89820" stroke-width="0.5"/><path d="M-6.4 5.8l3-2.8" stroke="#111" stroke-width="1.3"/><circle cx="-5.8" cy="5.2" r="1.3" fill="#111"/></g>
<g transform="translate(289.4 69.39999999999999)"><path d="M-6.2 2.2l6.2-2.6 6.4 2.4-6.2 3z" fill="#94a8c4" stroke="#6080b0" stroke-width="0.5"/><path d="M-6.2 -0.2l6.2-2.6 6.4 2.4-6.2 3z" fill="#b4c4d8" stroke="#6080b0" stroke-width="0.5"/><path d="M-6.2 -2.6l6.2-2.6 6.4 2.4-6.2 3z" fill="#ccd8e8" stroke="#6080b0" stroke-width="0.5"/><path d="M3.6 -3.8c-1.8-2.4-5.2-2-6 1" fill="none" stroke="#1c2f5a" stroke-width="1.9"/><path d="M-5.4 -3.4l2.6 3.6 2.2-3.2z" fill="#1c2f5a"/></g>
<g transform="translate(9.4 96.8)"><path d="M-5.2 4.6L5.2 -4.6" stroke="#222" stroke-width="1.4"/><circle cx="-5.2" cy="4.6" r="1.1" fill="#1f3560"/><circle cx="5.2" cy="-4.6" r="1.1" fill="#1f3560"/></g>
<g transform="translate(9.4 114)"><path d="M-5.4 5L5.6 -5.4" stroke="#222" stroke-width="1.5"/><circle cx="-5.4" cy="5" r="1.2" fill="#1f3560"/><circle cx="5.6" cy="-5.4" r="1.3" fill="#1f3560"/></g>
<g transform="translate(9.4 131.6)"><path d="M-5.6 2.6h8.4c3.6 0 3.8-5.2 0.2-5.4h-2" fill="none" stroke="#1c2f5a" stroke-width="1.5"/><circle cx="-5.6" cy="2.6" r="1.3" fill="#1f3560"/><circle cx="2.6" cy="2.6" r="1.2" fill="#1f3560"/></g>
<g transform="translate(9.6 148.6)"><path d="M0 -5.6l5.6 4.2-2.2 6.4h-6.8l-2.2-6.4z" fill="#e4e2f6" stroke="#333" stroke-width="1.4" stroke-linejoin="round"/></g>
<g transform="translate(9.4 165.8)"><path d="M-5 -2.8l10.6-0.4-0.4 5.6-10.6 0.4z" fill="#fdfdfd" stroke="#2a2a3a" stroke-width="1.4"/><circle cx="-5.4" cy="2.8" r="1.2" fill="#1a3a8a"/><circle cx="5.6" cy="-3.2" r="1.2" fill="#1a3a8a"/></g>
<g transform="translate(9.4 183)"><path d="M-5.4 5c0.6-5.4 4.6-9.4 10.8-10" fill="none" stroke="#1c2f5a" stroke-width="1.5"/><circle cx="-5.4" cy="5" r="1.2" fill="#1f3560"/><circle cx="5.4" cy="-5" r="1.2" fill="#1f3560"/><circle cx="-2.4" cy="-1.8" r="1" fill="#1f3560"/></g>
<g transform="translate(9.0 200.2)"><circle r="5.5" fill="#d6e8f8" stroke="#2a2a32" stroke-width="1.5"/><path d="M0 0l3.6-3.6" stroke="#1c2f5a" stroke-width="1.2"/><circle cx="0" cy="0" r="1.1" fill="#1f3560"/></g>
<g transform="translate(9.4 217.6)"><path d="M-3 -4.6c1.6-1.6 3.8-0.6 3.8 1 2.2-0.8 3.8 1.2 2.6 2.8 2 0.6 2.2 3.4 0.2 4.2-0.4 2-3.4 2.4-4.4 0.6-1.4-0.2-2.2-1.6-1.4-2.8-2.4 0.2-3.6-2-2.4-3.4-0.8-1.8 0.4-3 1.6-2.4z" fill="#e2e2f4" stroke="#333" stroke-width="1.4" stroke-linejoin="round"/></g>
<g transform="translate(9.4 235)"><path d="M-5.4 5c0.6-3 1.6-5.6 3.6-5.4 2 0.2 2.6 2.2 4.4 0.6 1.6-1.4 2.4-3.6 2.8-5.4" fill="none" stroke="#333" stroke-width="1.5"/></g>
<g transform="translate(9.200000000000001 252.2)"><ellipse rx="5.6" ry="3.4" fill="#d6e6f8" stroke="#1c2f5a" stroke-width="1.7"/></g>
<g transform="translate(9.0 269.6)"><path d="M-5.2 0.4c0-4.6 10.6-4.8 10.6 0 0 3-3.6 3.8-5.2 3.6" fill="#dbe8f6" stroke="#333" stroke-width="1.4"/><circle cx="-5" cy="0.8" r="1.2" fill="#1f3560"/><circle cx="0" cy="4" r="1.2" fill="#1f3560"/></g>
<g transform="translate(9.4 286.6)"><path d="M0 -5.4c3.4 0 5.4 2.4 5.4 5.4" fill="none" stroke="#8aa0c0" stroke-width="1.2"/><rect x="-4.6" y="-3.6" width="5.4" height="4.6" fill="#dde46a" stroke="#3a5a8a" stroke-width="1"/><circle cx="1.6" cy="3" r="2.7" fill="#e6ec9a" stroke="#3a5a8a" stroke-width="1.1"/><path d="M-5.4 -3v6.4" stroke="#1c3a7a" stroke-width="1.2"/><path d="M6.4 4v2.8h-2.8z" fill="#111"/></g>
<g transform="translate(9.4 303.2)"><rect x="-4.4" y="-3.8" width="5.8" height="4.8" fill="#dde46a" stroke="#333" stroke-width="1.1"/><circle cx="2.6" cy="2.8" r="2.8" fill="#f0f2c8" stroke="#333" stroke-width="1.2"/></g>
<g transform="translate(9.4 320.6)"><circle cx="0" cy="0" r="1.2" fill="#111"/></g>
<g transform="translate(9.4 337.8)"><path d="M-6 -3.4h12M-6 4h12" stroke="#3b6aa8" stroke-width="1.4"/><path d="M-3 -6v12M3 -6v12" stroke="#3b6aa8" stroke-width="1.5"/><path d="M-2 3l4.5-5.5M-2.4 0l2.6-3M0 3.4l2.6-3" stroke="#3b6aa8" stroke-width="0.7"/></g>
<g transform="translate(9.4 355.2)"><path d="M-5.8 -4.6h7.2l4.6 3.6v5.6h-11.8z" fill="#7fa4dc" stroke="#3a62a8" stroke-width="1.1"/><circle cx="-0.4" cy="0.2" r="2.3" fill="#fff" stroke="#3a62a8" stroke-width="0.8"/></g>
<text x="4.2" y="376.7" font-family="Liberation Sans,sans-serif" font-size="13.2" fill="#111" stroke="#111" stroke-width="0.3">A</text>
<g transform="translate(769.7 96.8)"><path d="M-5.9 -5.4v10.8M5.9 -5.4v10.8" stroke="#111" stroke-width="1.3"/><path d="M-5.9 -2.4h11.8" stroke="#111" stroke-width="1.1"/><path d="M-5.60 -2.40L-3.00 -3.70L-3.00 -1.10z" fill="#111"/><path d="M5.60 -2.40L3.00 -1.10L3.00 -3.70z" fill="#111"/></g>
<g transform="translate(769.7 114)"><path d="M-3.4 -3L3.6 3" stroke="#111" stroke-width="1.4"/><path d="M-5.6 -1l4-3.8M1.6 5.2l4-3.8" stroke="#111" stroke-width="1.2"/><circle cx="-2" cy="-1.8" r="1" fill="#111"/></g>
<g transform="translate(769.7 131.4)"><path d="M-2.6 -3.6v8.4M-3.6 4.4h9.4M-2.6 -3.4l3 4 3.6-0.8 1.2-3.6M0.4 0.6v4M5.6 -3.6v4" fill="none" stroke="#111" stroke-width="1.1"/><circle cx="-2.6" cy="-6" r="0.9" fill="#5a6a8a"/><rect x="3.4" y="-6.8" width="2" height="2" fill="#7f9fd0"/><circle cx="-5.6" cy="3.6" r="0.9" fill="#5a6a8a"/><path d="M-5.6 -3v2" stroke="#444" stroke-width="0.8"/></g>
<g transform="translate(769.7 153)"><circle r="6" fill="none" stroke="#6a6458" stroke-width="1.1"/><path d="M1.4 1.2l-3.4-3.4" stroke="#111" stroke-width="1.2"/><path d="M-4.20 -4.20L-0.88 -2.72L-2.72 -0.88z" fill="#111"/></g>
<g transform="translate(769.7 170.4)"><circle r="6" fill="none" stroke="#6a6458" stroke-width="1.1"/><path d="M-4 -3.6l8 7.2" stroke="#111" stroke-width="1.5"/><path d="M-4.40 -4.00L-1.32 -3.24L-3.32 -1.01z" fill="#111"/><path d="M4.40 4.00L1.32 3.24L3.32 1.01z" fill="#111"/></g>
<g transform="translate(769.7 188)"><path d="M-6 5.4h11.8" stroke="#111" stroke-width="1.3"/><path d="M-6 2l6.6-8" stroke="#111" stroke-width="1.3"/><path d="M0 -5.4c2.6 2 4 5.4 4.4 9.6" fill="none" stroke="#111" stroke-width="1.1"/><circle cx="0.4" cy="-4.4" r="1.1" fill="#111"/><circle cx="4.4" cy="3.6" r="1.1" fill="#111"/></g>
<g transform="translate(769.7 208.8)"><path d="M-5.4 -5.6v11.2M5.2 -5.6v11.2" stroke="#111" stroke-width="1.3"/><path d="M-5.4 -2.8h10.6" stroke="#111" stroke-width="1"/><path d="M2.2 -5l-4.2 4.4 2.4 0.6-1.2 4.6 4.6-5.6-2.4-0.6z" fill="#f4ea20" stroke="#8a8a10" stroke-width="0.5"/></g>
<g transform="translate(769.7 226)"><path d="M-5.4 -5.6v11.2M1.8 0v5.6M5.2 -5.6v5.6" stroke="#111" stroke-width="1.3"/><path d="M-5.4 -2.8h10.6M-5.4 2.8h7.2" stroke="#111" stroke-width="1"/><circle cx="4.4" cy="-2.8" r="1" fill="#111"/><circle cx="-4.4" cy="2.8" r="0.9" fill="#111"/></g>
<g transform="translate(769.7 243.4)"><path d="M-5.8 -5.4v10.8M0.2 -5.4v10.8M5.8 -5.4v10.8" stroke="#111" stroke-width="1.2"/><path d="M-5.8 -2.4h11.6" stroke="#111" stroke-width="1.1"/></g>
<g transform="translate(769.7 266)"><path d="M-2 -4.2c3.6-0.6 6 3.6 5.2 8.4l-1.8 0.6c-2.2-1.6-4-5-3.4-9z" fill="#d9e424" stroke="#6f7a14" stroke-width="0.7"/><path d="M-5.60 -1.60L-4.01 -5.05L-1.88 -2.40z" fill="#111"/><path d="M3.6 -5.6l1.6 2.6h-2.6z" fill="#5a6aa0"/></g>
<g transform="translate(769.7 283)"><rect x="-6.3" y="-4.6" width="12.6" height="9.2" fill="#4f7e9e" stroke="#3a6282" stroke-width="0.6"/><path d="M0 -4.6v9.2" stroke="#c8dcea" stroke-width="0.8"/><circle cx="-3.2" cy="0" r="2.1" fill="none" stroke="#e4f0f8" stroke-width="1.1"/><path d="M-3.2 -2.6v5.2M-5.8 0h5.2" stroke="#e4f0f8" stroke-width="0.7"/><path d="M2 -2.6h1.4a2.6 2.6 0 0 1 0 5.2h-1.4z" fill="none" stroke="#e4f0f8" stroke-width="1.1"/></g>
<g transform="translate(769.7 300.2)"><circle r="6" fill="none" stroke="#6a6458" stroke-width="1.1"/><path d="M-2.4 0h4.8M0 -2.4v4.8" stroke="#111" stroke-width="1.5"/></g>
<text x="766.3000000000001" y="323" font-family="Liberation Sans,sans-serif" font-weight="bold" font-size="9" fill="#234a86">A</text>
<g transform="translate(769.7 325.4)"><path d="M-6 0h12" stroke="#111" stroke-width="1.2"/><path d="M-6.1 -1.8v3.6M6.1 -1.8v3.6" stroke="#111" stroke-width="1.1"/><path d="M-5.40 0.00L-3.00 -1.10L-3.00 1.10z" fill="#111"/><path d="M5.40 0.00L3.00 1.10L3.00 -1.10z" fill="#111"/></g>
<g transform="translate(769.7 339.6)"><path d="M4.6 -6.6l-5.2 7" stroke="#e8c430" stroke-width="2.2"/><path d="M-0.6 0.4l-1.4 2.2 2.4-0.8z" fill="#222"/><path d="M-6 3.6h12" stroke="#111" stroke-width="1.2"/><path d="M-6.1 1.8v3.6M6.1 1.8v3.6" stroke="#111" stroke-width="1.1"/><path d="M-5.40 3.60L-3.00 2.50L-3.00 4.70z" fill="#111"/><path d="M5.40 3.60L3.00 4.70L3.00 2.50z" fill="#111"/></g>
<g transform="translate(769.7 359.6)"><path d="M-5.6 -6v4M5.4 -6v4M-5.6 2v4M5.4 2v4" stroke="#111" stroke-width="1.1"/><path d="M-2 -4l2 3 2-3" stroke="#333" stroke-width="1" fill="none"/></g>
<g transform="translate(769.7 378.6)"><path d="M-6 3.6h12" stroke="#111" stroke-width="1.5"/><path d="M-6.2 1.6v4M6.2 1.6v4" stroke="#111" stroke-width="1.1"/><path d="M-5.6 3.6l2.6-1.3v2.6zM5.6 3.6l-2.6-1.3v2.6z" fill="#111"/><path d="M-1.6 2.8l2.6-0.6 2.4-3-1.6-1.2z" fill="#222"/><path d="M2 -1.4l3.6-4.6" stroke="#a07848" stroke-width="1.8"/></g>
<g transform="translate(789.6 96.8)"><path d="M-6 5.2h12.4" stroke="#334" stroke-width="1.1"/><path d="M-3.4 4l2.6 0.4 7-8-2.4-2z" fill="#e8c020"/><path d="M-3.4 4l2.6 0.4 2.4-2.8-2.4-2z" fill="#e07a7a"/><path d="M-0.4 -0.2l2.2 2" stroke="#889" stroke-width="0.8"/><path d="M-3.8 3.8l7.4-8.6" stroke="#a08a8a" stroke-width="0.5"/></g>
<g transform="translate(789.6 113.4)"><circle cx="-3.4" cy="-3" r="2.3" fill="#f4f8fc" stroke="#1c2f5a" stroke-width="1.4"/><circle cx="1" cy="3" r="2.6" fill="#f4f8fc" stroke="#1c2f5a" stroke-width="1.4"/><circle cx="4" cy="3.6" r="2.4" fill="#f4f8fc" stroke="#1c2f5a" stroke-width="1.3"/><path d="M-0.6 -4.6c2.4-1 4.6 0.2 5 2.4" fill="none" stroke="#2f5a94" stroke-width="1.5"/><path d="M2.6 -2.4h4l-2 2.6z" fill="#2f5a94"/></g>
<g transform="translate(789.6 131.4)"><path d="M-1.2 -4.6v8.4h-5z" fill="#f4f6fa" stroke="#222" stroke-width="1.2" stroke-linejoin="round"/><path d="M1.2 -4.6v8.4h5z" fill="#f4f6fa" stroke="#222" stroke-width="1.2" stroke-linejoin="round"/><path d="M0 -7v12.6" stroke="#6a8fd0" stroke-width="1.4"/><path d="M-2.4 -1.8l1.2-2.8M2.4 -1.8l-1.2-2.8" stroke="#111" stroke-width="1.6"/></g>
<g transform="translate(789.6 149.4)"><path d="M-6 3.4c-0.6-2.6 1-4.6 2.8-4.4 0-3.4 5.4-4.2 6.2-0.6 2.6-0.4 4.2 3 2.6 5.2z" fill="#9cc8ee" stroke="#2a3a5c" stroke-width="1.5" stroke-linejoin="round"/><path d="M-3.4 1.6c1-1.6 5.6-1.8 7 0" fill="none" stroke="#eef6fc" stroke-width="1"/><path d="M0.2 -2.6v4" stroke="#2a3a5c" stroke-width="1"/></g>
<g transform="translate(789.6 165.6)"><rect x="-6" y="-6.2" width="4.5" height="4.5" fill="#f4f6fa" stroke="#2a2a34" stroke-width="1.2"/><rect x="-6" y="1.4" width="4.5" height="4.5" fill="#f4f6fa" stroke="#2a2a34" stroke-width="1.2"/><rect x="1.6" y="-6.2" width="4.5" height="4.5" fill="#f4f6fa" stroke="#2a2a34" stroke-width="1.2"/><rect x="1.6" y="1.4" width="4.5" height="4.5" fill="#f4f6fa" stroke="#2a2a34" stroke-width="1.2"/></g>
<g transform="translate(789.6 182.8)"><path d="M0 -6l2.4 2.8h-1.5v2.3h2.3v-1.5l2.8 2.4-2.8 2.4v-1.5h-2.3v2.3h1.5l-2.4 2.8-2.4-2.8h1.5v-2.3h-2.3v1.5l-2.8-2.4 2.8-2.4v1.5h2.3v-2.3h-1.5z" fill="#2c4f84"/><circle r="1" fill="#a8c8ee"/></g>
<g transform="translate(789.6 200.2)"><circle r="5.2" fill="none" stroke="#2d6090" stroke-width="1.9"/><path d="M-5.6 -6.4l5 0.6-3.4 4.2z" fill="#2d6090"/><path d="M-1.2 -6.8l1.6 2.6" stroke="#ece9d8" stroke-width="1.2"/></g>
<g transform="translate(789.6 217.4)"><rect x="-6" y="-6" width="12" height="12" fill="#dbe9f8" stroke="#7f98bc" stroke-width="1.1"/><path d="M-1.4 -1.6h4.6v4.6" fill="none" stroke="#7f98bc" stroke-width="1"/><rect x="-4.4" y="1" width="4" height="4" fill="#f8fbff" stroke="#5f7ca8" stroke-width="1"/></g>
<g transform="translate(789.6 234.4)"><path d="M-5.6 -5.8h5l6.4 11.4h-11.4z" fill="#cfe4f4" stroke="#2a2a34" stroke-width="1.3" stroke-linejoin="round"/><path d="M-2.8 -5v10" stroke="#f4f8fc" stroke-width="1.6"/></g>
<g transform="translate(789.6 251.2)"><path d="M-5.6 0.2h12" stroke="#3f6aa8" stroke-width="1.3"/><path d="M-2.4 4.2l4.6-8.6" stroke="#5f86c0" stroke-width="1.2"/><path d="M0.6 0.2h2.4" stroke="#ece9d8" stroke-width="1.6"/></g>
<g transform="translate(789.6 269)"><path d="M-5.8 0.6h6.2" stroke="#2a2a34" stroke-width="1.4"/><path d="M1.4 4l4.6-8.6" stroke="#5f86c0" stroke-width="1.3"/><path d="M0.6 0.6h2.6" stroke="#8aa4cc" stroke-width="0.8"/></g>
<g transform="translate(789.6 286)"><rect x="-6" y="-4.4" width="12.2" height="9" rx="0.8" fill="#d6e6f4" stroke="#2a2a34" stroke-width="1.3"/><path d="M0.6 -5.6v2" stroke="#2a2a34" stroke-width="1"/></g>
<g transform="translate(789.6 303)"><path d="M-2 -4.4h-4v9h12.2v-9h-4" fill="#dbe8f4" stroke="#2a2a34" stroke-width="1.4"/></g>
<g transform="translate(789.6 320.2)"><path d="M-5.4 5.8v-6l4.6-5.2h7" fill="none" stroke="#2a3a5c" stroke-width="1.4"/><path d="M-4 -0.6l4-4.6h3l-6 6.6z" fill="#a8cce8"/></g>
<g transform="translate(789.6 337.4)"><path d="M-5.4 5.8c0-7 4-11.2 11.6-11.4" fill="none" stroke="#1c3460" stroke-width="1.6"/><path d="M-3.6 3c0.8-4 3.4-6.6 8-7.4" fill="none" stroke="#8fb8e0" stroke-width="1.4"/></g>
<g transform="translate(789.6 355)"><path d="M-4.6 3.4l8-8" stroke="#7a3a10" stroke-width="2.2"/><path d="M-5 -3l3 1.4 0.8-2.6 1.6 2.8 3-0.6-1.6 2.6 2 2.2-3 0.2-1 2.8-1.6-2.4-3 1 1.6-2.8-2.6-1.6z" fill="#f0a040" stroke="#b85a18" stroke-width="0.6"/><circle cx="-0.8" cy="0.4" r="1.6" fill="#fbe8b8"/><path d="M4.6 -5.8l1.4-1.2" stroke="#8ab0e0" stroke-width="1.2"/></g>
<path d="M286.0 258.2L296.6 266.6L297.1 263.9L764.9 351.2L765.1 349.8L298.4 257.0L299.0 254.3z" fill="#ee2d2d"/>
<path d="M781.3 356.6L769.8 351.2L769.9 354.2L611.0 362.1L611.0 362.9L770.1 359.8L770.2 362.8z" fill="#ee2d2d"/>
</svg>
</body></html>
